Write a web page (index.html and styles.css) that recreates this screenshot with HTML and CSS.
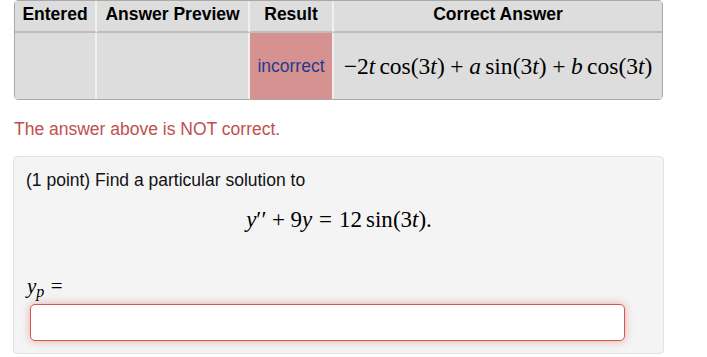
FILE: index.html
```html
<!DOCTYPE html>
<html lang="en">
<head>
    <meta charset="UTF-8">
    <title>Problem</title>
    <link rel="stylesheet" href="styles.css">
</head>
<body>
    <table class="attempt-results">
        <tr>
            <th class="col-entered">Entered</th>
            <th class="col-preview">Answer Preview</th>
            <th class="col-result">Result</th>
            <th class="col-correct">Correct Answer</th>
        </tr>
        <tr class="answer-row">
            <td></td>
            <td></td>
            <td class="incorrect">incorrect</td>
            <td class="math">&minus;2<i>t</i><span class="fn">cos</span>(3<i>t</i>)<span class="op">+</span><i>a</i><span class="fn">sin</span>(3<i>t</i>)<span class="op">+</span><i>b</i><span class="fn">cos</span>(3<i>t</i>)</td>
        </tr>
    </table>

    <p class="result-message">The answer above is NOT correct.</p>

    <div class="problem">
        <p class="statement">(1 point) Find a particular solution to</p>
        <div class="display-math"><i>y</i>&#8242;&#8242;<span class="op">+</span>9<i>y</i><span class="rel">=</span>12<span class="fn">sin</span>(3<i>t</i>).</div>
        <div class="answer-label"><i>y</i><sub><i>p</i></sub><span class="rel">=</span></div>
        <input type="text" class="answer-input">
    </div>
</body>
</html>
```

FILE: styles.css
```css
body {
    margin: 0;
    padding: 0 13px 0 14px;
    font-family: "Liberation Sans", Arial, sans-serif;
    font-size: 17.5px;
    background-color: white;
    color: #111;
}
.attempt-results {
    width: 649px;
    border: 1px solid #a9a9a9;
    border-radius: 4px;
    border-spacing: 0;
    background-color: #f2f2f2;
    table-layout: fixed;
}
.attempt-results th,
.attempt-results td {
    background-color: #dddddd;
    border-right: 2px solid #f0f0f0;
    border-bottom: 2px solid #bdbdbd;
    text-align: center;
    vertical-align: middle;
    padding: 0;
}
.attempt-results tr > :last-child {
    border-right: none;
}
.attempt-results tr:last-child > * {
    border-bottom: none;
}
.attempt-results th {
    height: 27px;
    padding-bottom: 3px;
    font-weight: bold;
    color: #000;
}
.col-entered { width: 80px; }
.col-preview { width: 151px; }
.col-result { width: 82px; }
.answer-row td {
    height: 66px;
}
.attempt-results td.incorrect {
    background-color: #d69191;
    color: #1f3c8c;
}
.math,
.display-math,
.answer-label {
    font-family: "Liberation Serif", "Times New Roman", serif;
    color: #000;
}
.op {
    margin: 0 0.24em;
}
.rel {
    margin: 0 0.3em;
}
.fn {
    margin-left: 0.18em;
}
.attempt-results td.math {
    font-size: 23.5px;
    white-space: nowrap;
}
.result-message {
    color: #c0504d;
    margin: 19px 0 16px 0;
}
.problem {
    width: 651px;
    box-sizing: border-box;
    margin-left: -1px;
    background-color: #f4f4f4;
    border: 1px solid #e3e3e3;
    border-radius: 4px;
    padding: 13px 37px 12px 12px;
}
.statement {
    margin: 0;
    color: #111;
}
.display-math {
    text-align: center;
    font-size: 23px;
    line-height: 26px;
    margin: 16px 0 44px 0;
    padding-left: 26px;
}
.answer-label {
    font-size: 21px;
    margin-left: 1px;
    line-height: 18px;
}
.answer-label sub {
    font-size: 16px;
    vertical-align: -4px;
}
.answer-input {
    display: block;
    width: 595px;
    height: 37px;
    box-sizing: border-box;
    margin: 3px 0 0 4px;
    border: 1px solid #d9534f;
    border-radius: 5px;
    box-shadow: 0 0 8px rgba(217, 83, 79, 0.45);
    background-color: white;
}
```
